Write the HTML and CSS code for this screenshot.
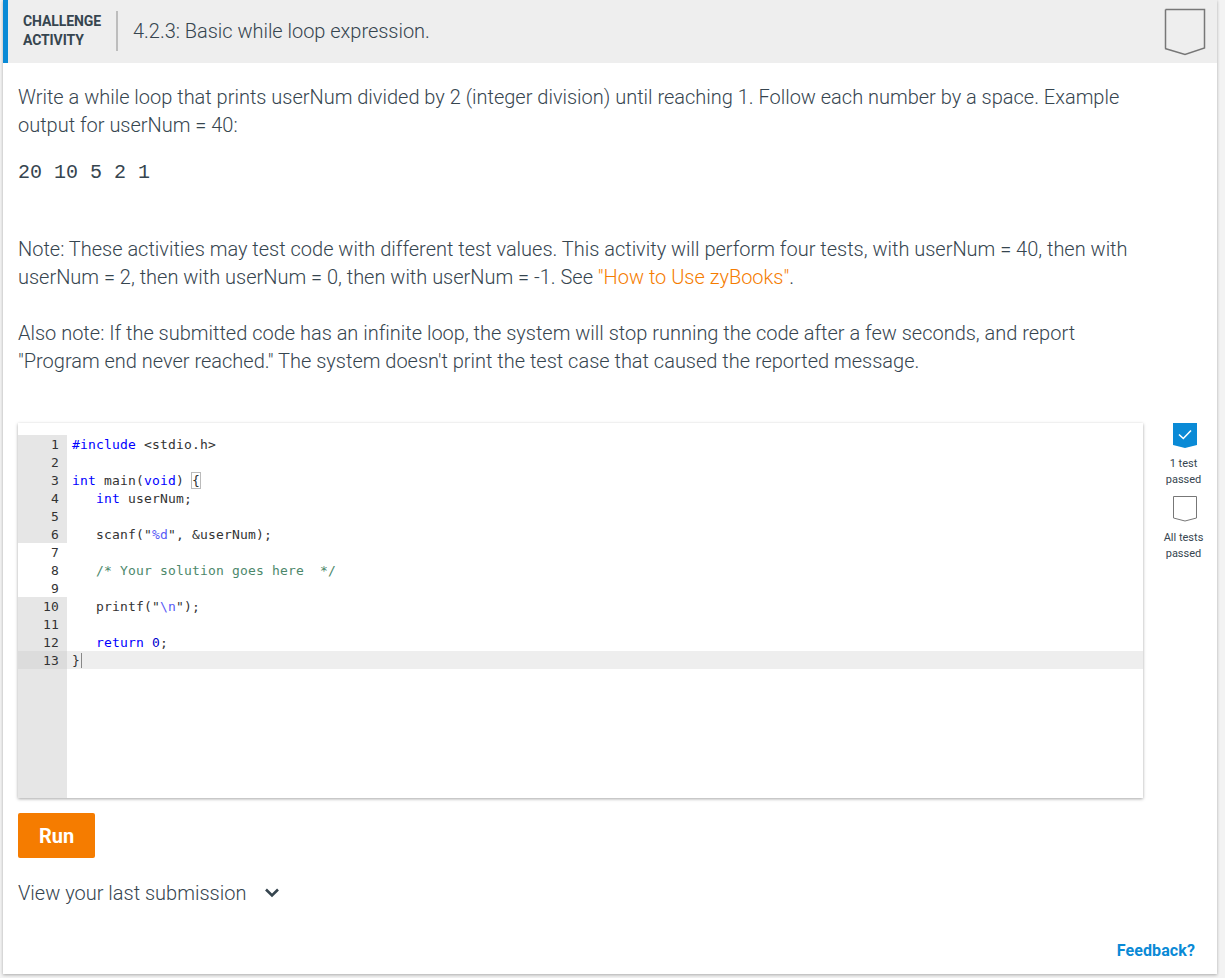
FILE: index.html
```html
<!DOCTYPE html>
<html lang="en">
<head>
<meta charset="utf-8">
<title>Challenge activity</title>
<link rel="stylesheet" href="styles.css">
</head>
<body>
<main class="card">
  <header class="head">
    <div class="kind">CHALLENGE<br>ACTIVITY</div>
    <h1 class="title">4.2.3: Basic while loop expression.</h1>
    <svg class="badge" width="42" height="48" viewBox="0 0 42 48"><path d="M1.500 1.500H40.500V40L21 46.500L1 40.500" fill="none" stroke="#777" stroke-width="1.500"/><path d="M1.500 1.500V40.500" fill="none" stroke="#777" stroke-width="1.500"/></svg>
  </header>
  <div class="body">
    <p class="para p1">Write a while loop that prints userNum divided by 2 (integer division) until reaching 1. Follow each number by a space. Example output for userNum = 40:</p>
    <pre class="sample">20 10 5 2 1</pre>
    <p class="para p2">Note: These activities may test code with different test values. This activity will perform four tests, with userNum = 40, then with userNum = 2, then with userNum = 0, then with userNum = -1. See <a class="link">"How to Use zyBooks"</a>.</p>
    <p class="para p3">Also note: If the submitted code has an infinite loop, the system will stop running the code after a few seconds, and report "Program end never reached." The system doesn't print the test case that caused the reported message.</p>
    <div class="workspace">
      <div class="editor">
        <div class="line"><span class="num">1</span><span class="code"><span class="kw">#include</span> &lt;stdio.h&gt;</span></div>
        <div class="line"><span class="num">2</span><span class="code"></span></div>
        <div class="line"><span class="num">3</span><span class="code"><span class="kw">int</span> main(<span class="kw">void</span>) <span class="brace">{</span></span></div>
        <div class="line"><span class="num">4</span><span class="code">   <span class="kw">int</span> userNum;</span></div>
        <div class="line"><span class="num">5</span><span class="code"></span></div>
        <div class="line"><span class="num">6</span><span class="code">   scanf(<span class="str">"</span><span class="esc">%d</span><span class="str">"</span>, &amp;userNum);</span></div>
        <div class="line open"><span class="num">7</span><span class="code"></span></div>
        <div class="line open"><span class="num">8</span><span class="code">   <span class="com">/* Your solution goes here  */</span></span></div>
        <div class="line open"><span class="num">9</span><span class="code"></span></div>
        <div class="line"><span class="num">10</span><span class="code">   printf(<span class="str">"</span><span class="esc">\n</span><span class="str">"</span>);</span></div>
        <div class="line"><span class="num">11</span><span class="code"></span></div>
        <div class="line"><span class="num">12</span><span class="code">   <span class="kw">return</span> <span class="num0">0</span>;</span></div>
        <div class="line active"><span class="num">13</span><span class="code"><span class="close">}</span></span></div>
        <div class="gutter-fill"></div>
      </div>
      <aside class="checks">
        <svg class="chip" width="24" height="25" viewBox="0 0 24 25"><path d="M0 0H24V22L12 25L0 22Z" fill="#0a8ad6"/><path d="M6 11.500L10.300 15.500L18 7.500" fill="none" stroke="#fff" stroke-width="1.600"/></svg>
        <div class="check-label">1 test<br>passed</div>
        <svg class="chip" width="24" height="26" viewBox="0 0 24 26"><path d="M.5 .5H23.500V22L12 25L.5 22Z" fill="none" stroke="#777"/></svg>
        <div class="check-label">All tests<br>passed</div>
      </aside>
    </div>
    <button class="run" type="button">Run</button>
    <div class="last">
      <span>View your last submission</span>
      <svg class="chev" width="16" height="10" viewBox="0 0 16 10"><path d="M2 1.500L8 7.500L14 1.500" fill="none" stroke="#36454f" stroke-width="2.600"/></svg>
    </div>
    <div class="foot"><a class="feedback">Feedback?</a></div>
  </div>
</main>
</body>
</html>
```

FILE: styles.css
```css
* { box-sizing: border-box; }
html, body { margin: 0; padding: 0; }
body { background: #f3f3f3; width: 1225px; height: 978px; overflow: hidden; font-family: Roboto, sans-serif; color: #36454f; }
.card { margin-left: 3px; width: 1214px; height: 974px; background: #fff; box-shadow: 0 1px 3px rgba(0,0,0,.3); }
.head { height: 63px; background: #eee; border-left: 5px solid #0a8ad6; display: flex; align-items: center; padding: 0 11px 0 15px; }
.kind { font-size: 14px; font-weight: 700; line-height: 19px; letter-spacing: -.1px; width: 95px; height: 40px; margin-bottom: 1px; border-right: 2px solid #bdbdbd; padding-top: 1px; color: #36454f; }
.title { flex: 1; margin: 0 0 1px 15px; font-size: 20px; font-weight: 300; letter-spacing: -.025px; color: #36454f; }
.body { padding: 20px 0 0 15px; }
.para { margin: 0; font-size: 20px; line-height: 28px; font-weight: 300; letter-spacing: -.008px; width: 1130px; color: #36454f; }
.sample { margin: 20px 0 0; font-family: "Liberation Mono", monospace; font-size: 20px; line-height: 28px; color: #36454f; }
.p2 { margin-top: 48px; }
.p3 { margin-top: 28px; }
.link { color: #f57c00; }
.workspace { display: flex; margin-top: 48px; }
.editor { height: 375px; flex: none; width: 1125px; background: #fff; box-shadow: 0 1px 3px rgba(0,0,0,.35); padding-top: 12px; display: flex; flex-direction: column; font-family: "DejaVu Sans Mono", monospace; font-size: 13px; }
.line { display: flex; height: 18px; line-height: 20px; background: #fff; }
.num { width: 49px; flex: none; background: #e6e6e6; color: #333; text-align: right; padding-right: 8px; letter-spacing: .17px; }
.open .num { background: #fff; }
.code { white-space: pre; padding-left: 5px; letter-spacing: .17px; color: #333; flex: 1; }
.active { background: #eee; }
.active .num { background: #dcdcdc; }
.kw { color: #00f; }
.num0 { color: #0000cd; }
.str { color: #333; }
.esc { color: #585cf6; }
.com { color: #4c886b; }
.brace { outline: 1px solid #bbb; }
.close { border-right: 1px solid #888; padding-right: 1px; }
.gutter-fill { width: 49px; flex: 1; background: #e6e6e6; }
.checks { width: 72px; margin-left: 7px; display: flex; flex-direction: column; align-items: center; }
.chip { flex: none; margin-left: 2px; }
.check-label { font-size: 11px; line-height: 16px; text-align: center; margin: 8px 0; color: #36454f; }
.run { display: block; margin-top: 15px; width: 77px; height: 45px; background: #f57c00; color: #fff; border: 0; border-radius: 2px; font: 700 20px Roboto, sans-serif; }
.last { margin-top: 22px; display: flex; align-items: center; gap: 18px; font-size: 20px; font-weight: 300; line-height: 26px; color: #36454f; }
.foot { margin-top: 35px; padding-right: 22px; text-align: right; }
.feedback { font-size: 16px; font-weight: 700; letter-spacing: .1px; color: #0a8ad6; }
```
